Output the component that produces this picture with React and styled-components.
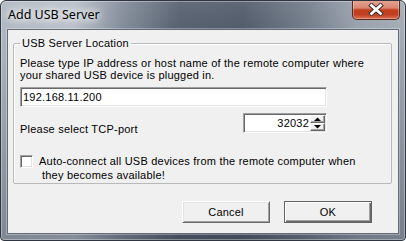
import React from "react";
import styled, { createGlobalStyle } from "styled-components";

const GlobalStyle = createGlobalStyle`
  html, body {
    margin: 0;
    padding: 0;
    background: #ffffff;
  }
  * {
    box-sizing: border-box;
  }
`;

function CloseGlyph() {
  return (
    <svg width="16" height="13" viewBox="0 0 16 13">
      <path d="M3.5 2.5 L12.5 10.5 M12.5 2.5 L3.5 10.5" stroke="#3b2a2a" strokeWidth="4.6" strokeLinecap="square" fill="none" />
      <path d="M3.5 2.5 L12.5 10.5 M12.5 2.5 L3.5 10.5" stroke="#ffffff" strokeWidth="2.8" strokeLinecap="square" fill="none" />
    </svg>
  );
}

function Arrow({ up }) {
  return (
    <svg width="7" height="4" viewBox="0 0 7 4">
      <path d={up ? "M0 4 L7 4 L3.5 0.5 Z" : "M0 0 L7 0 L3.5 3.5 Z"} fill="#000" />
    </svg>
  );
}

function App() {
  return (
    <>
      <GlobalStyle />
      <Window>
        <TitleBar>
          <Title>Add USB Server</Title>
          <CloseButton>
            <CloseGlyph />
          </CloseButton>
        </TitleBar>
        <Client>
          <GroupBox>
            <Legend>USB Server Location</Legend>
            <Text>
              Please type IP address or host name of the remote computer where
              <br />
              your shared USB device is plugged in.
            </Text>
            <TextInput defaultValue="192.168.11.200" />
            <PortRow>
              <PortLabel>Please select TCP-port</PortLabel>
              <Spinner>
                <SpinValue>32032</SpinValue>
                <SpinButtons>
                  <SpinBtn>
                    <Arrow up />
                  </SpinBtn>
                  <SpinBtn>
                    <Arrow />
                  </SpinBtn>
                </SpinButtons>
              </Spinner>
            </PortRow>
            <CheckRow>
              <CheckBox />
              <CheckLabel>
                Auto-connect all USB devices from the remote computer when
                <Wrapped>they becomes available!</Wrapped>
              </CheckLabel>
            </CheckRow>
          </GroupBox>
          <ButtonRow>
            <Button>Cancel</Button>
            <Button $default>OK</Button>
          </ButtonRow>
        </Client>
      </Window>
    </>
  );
}

const Window = styled.div`
  width: 406px;
  height: 241px;
  border: 1px solid #2f3641;
  border-radius: 6px 6px 4px 4px;
  overflow: hidden;
  background:
    linear-gradient(to bottom, rgba(255, 255, 255, 0.08) 0, rgba(255, 255, 255, 0) 30px, rgba(35, 45, 60, 0.35) 100%),
    linear-gradient(to right, #aeb6c0 0%, #b9c0c9 18%, #838c9a 30%, #56606f 44%, #515b6a 60%, #737d8b 76%, #98a1ac 88%, #a4acb6 100%);
  box-shadow: inset 0 0 0 1px rgba(255, 255, 255, 0.35);
`;

const TitleBar = styled.div`
  height: 29px;
  display: flex;
  align-items: flex-start;
  padding-left: 7px;
`;

const Title = styled.div`
  margin-top: 6px;
  font-family: "Noto Sans", "Open Sans", sans-serif;
  font-size: 12.5px;
  line-height: 16px;
  color: #000;
  text-shadow: 0 0 6px #fff, 0 0 10px #fff, 0 0 16px rgba(255, 255, 255, 0.9);
`;

const CloseButton = styled.div`
  margin-left: auto;
  margin-right: 5px;
  margin-top: -1px;
  width: 48px;
  height: 20px;
  display: flex;
  align-items: center;
  justify-content: center;
  border: 1px solid #5e2a20;
  border-top: none;
  border-radius: 0 0 5px 5px;
  background: linear-gradient(#e6a695 0%, #d98570 42%, #c2401f 52%, #c03e22 75%, #d9704f 100%);
  box-shadow: inset 0 0 0 1px rgba(255, 255, 255, 0.3);
`;

const Client = styled.div`
  margin: 0 7px;
  height: 203px;
  background: #f0f0f0;
  box-shadow: 0 0 0 1px #626c79, 0 0 0 2px rgba(255, 255, 255, 0.3);
  padding-top: 6px;
  font-family: "Liberation Sans", Arial, sans-serif;
  font-size: 11px;
  letter-spacing: 0.22px;
  color: #000;
  display: flex;
  flex-direction: column;
`;

const GroupBox = styled.fieldset`
  margin: 0 0 0 5px;
  width: 379px;
  height: 148px;
  padding: 7px 0 0 6px;
  border: 1px solid #b9b9b9;
  border-radius: 2px;
  box-shadow: inset 1px 1px 0 #ffffff;
`;

const Legend = styled.legend`
  padding: 0 2px;
  line-height: 14px;
`;

const Text = styled.div`
  line-height: 12px;
`;

const TextInput = styled.input`
  display: block;
  margin-top: 6px;
  width: 307px;
  height: 20px;
  padding: 0 2px;
  font-family: "Liberation Sans", Arial, sans-serif;
  font-size: 11px;
  letter-spacing: 0.22px;
  color: #000;
  background: #fff;
  border: 1px solid;
  border-color: #a0a0a0 #ffffff #ffffff #a0a0a0;
  box-shadow: inset 1px 1px 0 #696969, inset -1px -1px 0 #e3e3e3;
  outline: none;
`;

const PortRow = styled.div`
  margin-top: 6px;
  width: 307px;
  display: flex;
  justify-content: space-between;
  align-items: flex-start;
`;

const PortLabel = styled.div`
  margin-top: 10px;
  line-height: 12px;
`;

const Spinner = styled.div`
  width: 84px;
  height: 20px;
  display: flex;
  align-items: stretch;
  background: #fff;
  border: 1px solid;
  border-color: #a0a0a0 #ffffff #ffffff #a0a0a0;
  box-shadow: inset 1px 1px 0 #696969, inset -1px -1px 0 #e3e3e3;
  padding: 1px;
`;

const SpinValue = styled.div`
  flex: 1;
  text-align: right;
  padding-right: 1px;
  line-height: 17px;
`;

const SpinButtons = styled.div`
  width: 15px;
  display: flex;
  flex-direction: column;
`;

const SpinBtn = styled.div`
  flex: 1;
  display: flex;
  align-items: center;
  justify-content: center;
  background: #f0f0f0;
  border: 1px solid;
  border-color: #ffffff #696969 #696969 #ffffff;
  box-shadow: inset -1px -1px 0 #a0a0a0;
`;

const CheckRow = styled.div`
  margin-top: 19px;
  display: flex;
  align-items: flex-start;
`;

const CheckBox = styled.div`
  margin-top: 1px;
  width: 13px;
  height: 13px;
  flex: none;
  background: #fff;
  border: 1px solid;
  border-color: #a0a0a0 #ffffff #ffffff #a0a0a0;
  box-shadow: inset 1px 1px 0 #696969, inset -1px -1px 0 #e3e3e3;
`;

const CheckLabel = styled.div`
  margin-left: 6px;
  line-height: 14px;
`;

const Wrapped = styled.span`
  display: block;
  padding-left: 3px;
`;

const ButtonRow = styled.div`
  margin-top: 17px;
  padding-right: 26px;
  display: flex;
  justify-content: flex-end;
  gap: 14px;
`;

const Button = styled.button`
  width: 88px;
  height: 22px;
  padding: 0;
  font-family: "Liberation Sans", Arial, sans-serif;
  font-size: 11px;
  letter-spacing: 0.22px;
  color: #000;
  background: #f0f0f0;
  border: 1px solid;
  border-color: ${(p) => (p.$default ? "#646464" : "#ffffff #696969 #696969 #ffffff")};
  box-shadow: ${(p) =>
    p.$default
      ? "inset 1px 1px 0 #ffffff, inset -1px -1px 0 #696969, inset -2px -2px 0 #a0a0a0"
      : "inset 1px 1px 0 #e3e3e3, inset -1px -1px 0 #a0a0a0"};
`;

export default App;
